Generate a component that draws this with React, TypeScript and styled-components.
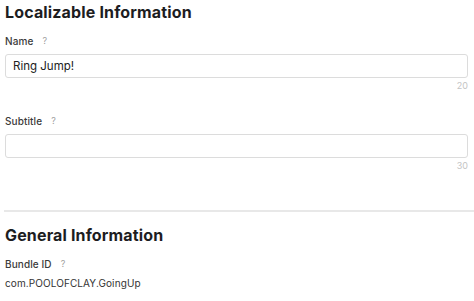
import styled, { createGlobalStyle } from 'styled-components';

const GlobalStyle = createGlobalStyle`
  body {
    margin: 0;
    background: #fff;
    font-family: Inter, "Liberation Sans", sans-serif;
    color: #1d1d1f;
  }
`;

const Page = styled.div`
  display: flex;
  flex-direction: column;
  padding: 0 6px 0 5px;
`;

const Heading = styled.h2<{ $top?: number }>`
  margin: ${(p) => p.$top ?? 0}px 0 0;
  font-size: 16px;
  font-weight: 700;
  line-height: 24px;
  letter-spacing: 0.15px;
`;

const Field = styled.div<{ $gap: number }>`
  display: flex;
  flex-direction: column;
  margin-top: ${(p) => p.$gap}px;
`;

const Label = styled.div`
  display: flex;
  align-items: center;
  gap: 9px;
  font-size: 10px;
  font-weight: 500;
  color: #3a3a3a;
  line-height: 14px;
  letter-spacing: 0.1px;
`;

const Help = styled.span`
  font-size: 9px;
  color: #a0a0a0;
  font-weight: 400;
`;

const Input = styled.input`
  box-sizing: border-box;
  margin-top: 6px;
  height: 24px;
  width: 100%;
  border: 1px solid #dcdcdc;
  border-radius: 3px;
  padding: 0 7px;
  font-family: Inter, "Liberation Sans", sans-serif;
  font-size: 11.5px;
  color: #222;
  outline: none;
`;

const Counter = styled.div`
  align-self: flex-end;
  font-size: 9px;
  color: #c4c4c4;
  line-height: 12px;
  margin-top: 2px;
`;

const Divider = styled.hr`
  margin: 38px -6px 0 -1px;
  border: none;
  border-top: 2px solid #e8e8e8;
`;

const Value = styled.div`
  margin-top: 5px;
  font-size: 10px;
  color: #333;
  line-height: 14px;
  letter-spacing: 0.1px;
`;

export default function App() {
  return (
    <Page>
      <GlobalStyle />
      <Heading>Localizable Information</Heading>
      <Field $gap={10}>
        <Label>
          Name <Help>?</Help>
        </Label>
        <Input defaultValue="Ring Jump!" />
        <Counter>20</Counter>
      </Field>
      <Field $gap={22}>
        <Label>
          Subtitle <Help>?</Help>
        </Label>
        <Input defaultValue="" />
        <Counter>30</Counter>
      </Field>
      <Divider />
      <Heading $top={11}>General Information</Heading>
      <Field $gap={10}>
        <Label>
          Bundle ID <Help>?</Help>
        </Label>
        <Value>com.POOLOFCLAY.GoingUp</Value>
      </Field>
    </Page>
  );
}
